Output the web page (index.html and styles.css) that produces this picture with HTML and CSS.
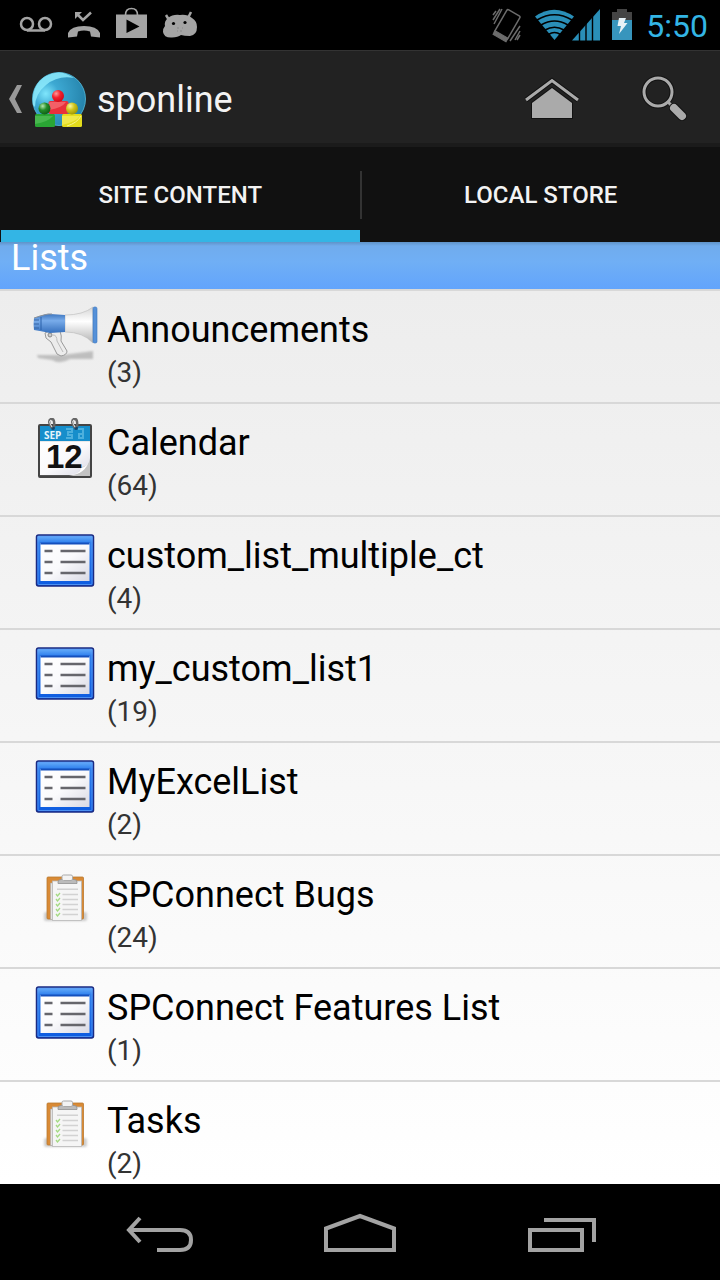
FILE: index.html
```html
<!DOCTYPE html>
<html lang="en">
<head>
    <meta charset="UTF-8">
    <meta name="viewport" content="width=device-width, initial-scale=1.0">
    <title>sponline</title>
    <link rel="stylesheet" href="styles.css">
</head>
<body>
    <!-- shared icons for the list rows -->
    <svg class="defs" width="0" height="0" aria-hidden="true">
        <defs>
            <linearGradient id="blue" x1="0" y1="0" x2="0" y2="1">
                <stop offset="0" stop-color="#6fb4fb"/>
                <stop offset="0.15" stop-color="#2f80ee"/>
                <stop offset="1" stop-color="#0d5be0"/>
            </linearGradient>
            <linearGradient id="paper" x1="0" y1="0" x2="1" y2="1">
                <stop offset="0" stop-color="#ffffff"/>
                <stop offset="0.5" stop-color="#fafafc"/>
                <stop offset="1" stop-color="#d9d9e4"/>
            </linearGradient>
            <linearGradient id="horn" x1="0" y1="0" x2="0" y2="1">
                <stop offset="0" stop-color="#d5d5d5"/>
                <stop offset="0.4" stop-color="#ffffff"/>
                <stop offset="1" stop-color="#b4b4b4"/>
            </linearGradient>
            <linearGradient id="hornBlue" x1="0" y1="0" x2="0" y2="1">
                <stop offset="0" stop-color="#3f77c0"/>
                <stop offset="0.35" stop-color="#79acea"/>
                <stop offset="1" stop-color="#3670bd"/>
            </linearGradient>
            <filter id="soft" x="-20%" y="-50%" width="140%" height="200%">
                <feGaussianBlur stdDeviation="1"/>
            </filter>
            <symbol id="icon-announce" viewBox="0 0 66 64">
                <path d="M5 50L30 50L61 46L61 54L38 54Q28 60 20 55L6 53Z" fill="#aaa" opacity="0.7" filter="url(#soft)"/>
                <path d="M13 28L17 26L28 26Q30 31 29 36L35 46Q35 50 29 51L25 49L19 37L14 33Z" fill="#ececec" stroke="#999"/>
                <path d="M21 30Q25 30 25 36L31 47" fill="none" stroke="#bbb"/>
                <circle cx="18" cy="30" r="2" fill="#ccc" stroke="#888"/>
                <path d="M33 10Q51 10 61 2L61 38Q51 27 33 27Z" fill="url(#horn)" stroke="#bbb" stroke-width="0.6"/>
                <path d="M2 13L8 11Q12 9 18 9L33 10L33 27L18 28L8 26L2 25Q1 19 2 13Z" fill="url(#hornBlue)"/>
                <path d="M2 15H7M2 19H7M2 23H7" stroke="#3565a5" stroke-width="1.200"/>
                <path d="M9 12V25" stroke="#2a61aa"/>
                <path d="M2 13L8 11L16 9H20" fill="none" stroke="#8a9098"/>
                <rect x="61" y="2" width="4" height="36" rx="1.500" fill="#5590d8" stroke="#3b76c0" stroke-width="0.6"/>
            </symbol>
            <symbol id="icon-calendar" viewBox="0 0 66 64">
                <path d="M8 60H60" stroke="#777" stroke-width="2" opacity="0.5" filter="url(#soft)"/>
                <rect x="7" y="7" width="52" height="52" rx="1" fill="#e9e9e9" stroke="#444" stroke-width="2"/>
                <path d="M8 24H58V48Q54 58 40 58H8Z" fill="url(#paper)"/>
                <rect x="8" y="8" width="50" height="15" fill="#168ecb"/>
                <path d="M8 57.500H58" stroke="#555"/>
                <path d="M58 40Q57 49 49 49Q49 56 37 58H58Z" fill="#c4c4c4"/>
                <path d="M58 41Q56 49 49 50Q48 56 38 57Q53 57 58 41Z" fill="#fff"/>
                <path d="M34 11H40V14H36V17H40V20H34M46 11H51V20H47V16H51" fill="none" stroke="#4db0dd" stroke-width="2"/>
                <text x="12" y="21" class="cal-month">SEP</text>
                <text x="14" y="50" class="cal-day">12</text>
                <circle cx="21" cy="10" r="2" fill="#17456a"/>
                <circle cx="44" cy="10" r="2" fill="#17456a"/>
                <path d="M20 10Q15 3 19 1Q23 0 22 9M43 10Q38 3 42 1Q46 0 45 9" fill="none" stroke="#666" stroke-width="2.500"/>
                <path d="M20 9Q16 3 19 2M43 9Q39 3 42 2" fill="none" stroke="#eee"/>
            </symbol>
            <symbol id="icon-list" viewBox="0 0 66 64">
                <rect x="4.500" y="4" width="57" height="51" rx="2" fill="url(#blue)" stroke="#1a2a82" stroke-width="1.500"/>
                <rect x="6" y="5.500" width="54" height="48" rx="1" fill="none" stroke="#5c9df6" stroke-width="0.8"/>
                <rect x="8.500" y="12" width="49" height="38" fill="url(#paper)"/>
                <path d="M8.500 12.500H57.500" stroke="#1450bd" stroke-width="2"/>
                <path d="M12.500 20H20.500M12.500 31H20.500M12.500 42H20.500M28.500 20H53.500M28.500 31H53.500M28.500 42H53.500" stroke="#66666c" stroke-width="2.400"/>
            </symbol>
            <symbol id="icon-tasks" viewBox="0 0 66 64">
                <rect x="12" y="42" width="43" height="9" rx="2" fill="#888" opacity="0.4" filter="url(#soft)"/>
                <rect x="15" y="7" width="36.500" height="42" rx="1" fill="#d98a35" stroke="#b97830" stroke-width="0.8"/>
                <path d="M18.500 13V49.500H21V13Z" fill="#e3e3e3" stroke="#aaa" stroke-width="0.6"/>
                <rect x="20.500" y="11" width="29" height="39.500" fill="#f5f5f5" stroke="#b8b8b8" stroke-width="0.8"/>
                <path d="M25 19.300H46M30.500 24.500H46M30.500 29.500H46M30.500 34.500H46M30.500 39.500H46M30.500 44.500H46" stroke="#d2d2d2" stroke-width="1.400"/>
                <path d="M24 24L25.500 26L28 23M24 29L25.500 31L28 28M24 34L25.500 36L28 33M24 39L25.500 41L28 38M24 44L25.500 46L28 43" fill="none" stroke="#a5da83" stroke-width="1.300"/>
                <path d="M26 12Q26 9.500 29 9.500H42Q45 9.500 45 12V13.500H26Z" fill="#bbb" stroke="#909090" stroke-width="0.8"/>
                <rect x="30" y="5" width="10.500" height="5.500" rx="1.500" fill="#f3f3f3" stroke="#aaa"/>
            </symbol>
        </defs>
    </svg>

    <div class="status-bar">
        <div class="notifications">
            <svg width="48" height="50" viewBox="0 0 48 50" fill="none" stroke="#a4a4a4" stroke-width="2.500">
                <circle cx="15" cy="24" r="6"/>
                <circle cx="33" cy="24" r="6"/>
                <path d="M15 30.500H33"/>
            </svg>
            <svg width="48" height="50" viewBox="0 0 48 50">
                <path d="M16 13L23 20L31 12.500" fill="none" stroke="#a4a4a4" stroke-width="2.500"/>
                <path d="M15 12H22L15 19Z" fill="#a4a4a4"/>
                <path d="M8 37.500V33Q11 26 24 26Q37 26 40 33V37.500L31 36.500L30 31.500Q24 29.500 18 31.500L17 36.500Z" fill="#a4a4a4"/>
            </svg>
            <svg width="48" height="50" viewBox="0 0 48 50">
                <path d="M17.500 15Q17.500 8.500 23.500 8.500Q29.500 8.500 29.500 15" fill="none" stroke="#a4a4a4" stroke-width="1.600"/>
                <path d="M8 14.500H39V38H8ZM18.500 19.500V33L31.500 26.500Z" fill="#a4a4a4" fill-rule="evenodd"/>
            </svg>
            <svg width="48" height="50" viewBox="0 0 48 50">
                <path d="M10 15L13 20M35 12L32 18" stroke="#a4a4a4" stroke-width="2.500"/>
                <path d="M12 18Q17 14 24 15Q31 14 36 18Q41 21 41 27Q41 35 34 36Q28 36 25 35Q22 37 16 37.500Q8 38 7 32Q7 28 9 26Q8 21 12 18Z" fill="#a4a4a4"/>
                <path d="M21 28H23M24 31H26M21 31H22M26 28H27" stroke="#888"/>
                <circle cx="17.500" cy="23.500" r="1.600"/>
                <circle cx="29" cy="22.500" r="1.600"/>
            </svg>
        </div>
        <div class="system">
            <svg width="40" height="50" viewBox="0 0 40 50">
                <g transform="translate(19 25) rotate(30)" fill="none" stroke="#6c6c6c">
                    <rect x="-7.500" y="-14" width="15" height="27" rx="1.500" stroke-width="1.500"/>
                    <path d="M-7.500 11H7.500V15H-7.500Z" fill="#6c6c6c"/>
                </g>
                <path d="M5 15L8 11M5 20L12 9M6 24L14 9M32 26L22 41M32 31L27 40M32 35L29 40" stroke="#6c6c6c" stroke-width="1.500"/>
            </svg>
            <svg width="72" height="50" viewBox="0 0 72 50">
                <path d="M3 16.500Q22 3 42 16.500L22.500 40Z" fill="#2a8fb8"/>
                <path d="M5 20Q22.500 9.500 40 20M9 25Q22.500 17 36 25M13 30Q22.500 24.500 32 30M16.500 34.500Q22.500 30.500 28.500 34.500" fill="none" stroke="#000" stroke-width="1.600"/>
                <path d="M40 40.500L68 9V40.500Z" fill="#2a8fb8"/>
                <path d="M47.500 10V41M54 10V41M60.500 10V41" stroke="#000" stroke-width="1.400"/>
            </svg>
            <svg width="28" height="50" viewBox="0 0 28 50">
                <path d="M4 12H9V9H19V12H24V20H4Z" fill="#444"/>
                <path d="M4 20H24V40H4Z" fill="#3795bd"/>
                <path d="M11 18H18L16 23H19.500L11 34L13 26H9.500Z" fill="#e6f2f7"/>
            </svg>
            <span class="clock">5:50</span>
        </div>
    </div>

    <header class="action-bar">
        <button class="up" aria-label="Navigate up">
            <svg width="16" height="30" viewBox="0 0 16 30">
                <path d="M9 0H14L7 14L14 28H9L1 14Z" fill="#999"/>
            </svg>
            <svg width="54" height="58" viewBox="0 0 54 58">
                <defs>
                    <radialGradient id="globe" cx="0.25" cy="0.4" r="0.8">
                        <stop offset="0" stop-color="#7fe6fc"/>
                        <stop offset="0.3" stop-color="#3da9d3"/>
                        <stop offset="1" stop-color="#2380a8"/>
                    </radialGradient>
                    <radialGradient id="redBall" cx="0.35" cy="0.3" r="0.7"><stop offset="0" stop-color="#ff9a9a"/><stop offset="0.5" stop-color="#f4202c"/><stop offset="1" stop-color="#d00d1c"/></radialGradient>
                    <radialGradient id="greenBall" cx="0.35" cy="0.3" r="0.7"><stop offset="0" stop-color="#b7e8b0"/><stop offset="0.5" stop-color="#238c28"/><stop offset="1" stop-color="#126018"/></radialGradient>
                    <radialGradient id="yellowBall" cx="0.35" cy="0.3" r="0.7"><stop offset="0" stop-color="#fbf7a0"/><stop offset="0.5" stop-color="#cfc41c"/><stop offset="1" stop-color="#a29a08"/></radialGradient>
                </defs>
                <circle cx="27" cy="28" r="26.500" fill="url(#globe)" stroke="#55bfe0" stroke-width="0.8"/>
                <path d="M1 34Q-1 14 14 5Q28 -3 42 7Q26 4 14 14Q3 23 3 36Z" fill="#8deafb" opacity="0.85"/>
                <rect x="16.500" y="30" width="20" height="13" rx="2" fill="#e8303c"/>
                <path d="M17 32Q17 31 19 31H34Q30 37 17 39Z" fill="#f56b72" opacity="0.8"/>
                <circle cx="26" cy="25" r="6" fill="url(#redBall)"/>
                <rect x="3" y="43" width="20" height="13" rx="1.500" fill="#2aa534"/>
                <path d="M3 45H21Q16 51 3 53Z" fill="#65c968" opacity="0.5"/>
                <circle cx="12.500" cy="37.500" r="6" fill="url(#greenBall)"/>
                <rect x="30" y="43" width="20" height="13" rx="1.500" fill="#e3dc1c"/>
                <path d="M30 45H48Q44 51 30 54Z" fill="#f6f16a" opacity="0.6"/>
                <path d="M35 55Q45 52 49 45" fill="none" stroke="#f9f68c"/>
                <circle cx="40" cy="37.500" r="6" fill="url(#yellowBall)"/>
            </svg>
        </button>
        <h1>sponline</h1>
        <button class="action" aria-label="Home">
            <svg width="56" height="48" viewBox="0 0 56 48">
                <path d="M2 25L28 5.500L54 25" fill="none" stroke="#111" stroke-width="5"/>
                <path d="M8 28L28 13L48 28V43H8Z" fill="#aaa" stroke="#111" stroke-width="2" paint-order="stroke"/>
                <path d="M2 25L28 5.500L54 25" fill="none" stroke="#aaa" stroke-width="3"/>
            </svg>
        </button>
        <button class="action" aria-label="Search">
            <svg width="48" height="48" viewBox="0 0 48 48" fill="none">
                <circle cx="18" cy="17" r="14" stroke="#111" stroke-width="5"/>
                <circle cx="18" cy="17" r="14" stroke="#aaa" stroke-width="3"/>
                <path d="M28 27L34 33" stroke="#aaa" stroke-width="3"/>
                <path d="M34 33L42 41" stroke="#111" stroke-width="10" stroke-linecap="round"/>
                <path d="M34 33L42 41" stroke="#aaa" stroke-width="8" stroke-linecap="round"/>
            </svg>
        </button>
    </header>

    <nav class="tabs">
        <button class="tab selected">SITE CONTENT</button>
        <span class="divider"></span>
        <button class="tab">LOCAL STORE</button>
    </nav>

    <main>
        <h2>Lists</h2>
        <ul class="lists">
            <li><a href="#"><svg class="icon"><use href="#icon-announce"/></svg><span class="name">Announcements</span><span class="count">(3)</span></a></li>
            <li><a href="#"><svg class="icon"><use href="#icon-calendar"/></svg><span class="name">Calendar</span><span class="count">(64)</span></a></li>
            <li><a href="#"><svg class="icon"><use href="#icon-list"/></svg><span class="name">custom_list_multiple_ct</span><span class="count">(4)</span></a></li>
            <li><a href="#"><svg class="icon"><use href="#icon-list"/></svg><span class="name">my_custom_list1</span><span class="count">(19)</span></a></li>
            <li><a href="#"><svg class="icon"><use href="#icon-list"/></svg><span class="name">MyExcelList</span><span class="count">(2)</span></a></li>
            <li><a href="#"><svg class="icon"><use href="#icon-tasks"/></svg><span class="name">SPConnect Bugs</span><span class="count">(24)</span></a></li>
            <li><a href="#"><svg class="icon"><use href="#icon-list"/></svg><span class="name">SPConnect Features List</span><span class="count">(1)</span></a></li>
            <li><a href="#"><svg class="icon"><use href="#icon-tasks"/></svg><span class="name">Tasks</span><span class="count">(2)</span></a></li>
        </ul>
    </main>

    <footer class="nav-bar">
        <button aria-label="Back">
            <svg width="80" height="48" viewBox="0 0 80 48">
                <path d="M20 10L9 22L20 34M9 22H60Q71 22 71 32Q71 42 60 42H37"/>
            </svg>
        </button>
        <button aria-label="Home screen">
            <svg width="80" height="48" viewBox="0 0 80 48">
                <path d="M6 42V20.500L40 8L74 20.500V42Z"/>
            </svg>
        </button>
        <button aria-label="Recent apps">
            <svg width="80" height="48" viewBox="0 0 80 48">
                <path d="M10 22H62V42H10ZM24 12H74V34"/>
            </svg>
        </button>
    </footer>
</body>
</html>
```
FILE: styles.css
```css
* {
    box-sizing: border-box;
}
body {
    font-family: Roboto, "Liberation Sans", sans-serif;
    display: flex;
    flex-direction: column;
    height: 100vh;
    margin: 0;
    background-color: #000;
    overflow: hidden;
}
svg {
    display: block;
}
.defs {
    position: absolute;
}
button {
    display: flex;
    justify-content: center;
    align-items: center;
    padding: 0;
    font-family: inherit;
    background: none;
    border: none;
    cursor: pointer;
}

/* status bar */
.status-bar {
    display: flex;
    justify-content: space-between;
    height: 50px;
    flex-shrink: 0;
    padding: 0 12px;
}
.notifications {
    display: flex;
}
.system {
    display: flex;
    gap: 4px;
}
.clock {
    padding-left: 6px;
    font-size: 32px;
    line-height: 52px;
    color: #33b5e5;
}

/* action bar */
.action-bar {
    display: flex;
    align-items: stretch;
    height: 97px;
    flex-shrink: 0;
    background-color: #222;
    border-top: 1px solid #333;
    border-bottom: 4px solid #1b1b1b;
}
.up {
    padding: 6px 0 0 8px;
    gap: 8px;
}
h1 {
    flex: 1;
    margin: 0;
    padding-left: 11px;
    font-size: 36px;
    font-weight: normal;
    line-height: 98px;
    color: #f3f3f3;
}
.action {
    width: 112px;
    padding-top: 4px;
}

/* tabs */
.tabs {
    display: flex;
    align-items: center;
    height: 95px;
    flex-shrink: 0;
    background-color: #111;
}
.tab {
    flex: 1;
    align-self: stretch;
    font-size: 24px;
    font-weight: 500;
    color: #f3f3f3;
    border-top: 12px solid transparent;
    border-bottom: 12px solid transparent;
}
.tab.selected {
    margin-left: 1px;
    border-bottom-color: #33b5e5;
}
.divider {
    width: 2px;
    height: 48px;
    background-color: #333;
}

/* content */
main {
    flex: 1;
    min-height: 0;
    overflow: hidden;
    background: linear-gradient(#ececec, #fff);
}
h2 {
    height: 47px;
    margin: 0;
    padding-left: 11px;
    font-size: 36px;
    font-weight: normal;
    line-height: 32px;
    color: #fff;
    background: linear-gradient(#5f93c8, #70aced 4px, #70aff5 20px, #62a4fc);
}
.lists {
    margin: 0;
    padding: 0;
    list-style: none;
}
.lists li {
    border-top: 2px solid #d8d8d8;
}
.lists a {
    display: grid;
    grid-template-columns: 66px 1fr;
    grid-template-rows: 44px 42px;
    column-gap: 9px;
    padding: 17px 8px 8px 32px;
    color: #000;
    text-decoration: none;
}
.icon {
    grid-row: 1 / 3;
    width: 66px;
    height: 64px;
    margin-top: -3px;
}
.name {
    font-size: 36px;
    line-height: 44px;
}
.count {
    font-size: 28px;
    line-height: 42px;
    color: #333;
}
.cal-month {
    font: bold 10px "Open Sans", sans-serif;
    fill: #e4f5fc;
}
.cal-day {
    font: bold 33px "Liberation Sans", sans-serif;
    fill: #111;
}

/* navigation bar */
.nav-bar {
    display: flex;
    height: 96px;
    flex-shrink: 0;
    padding: 0 60px;
}
.nav-bar button {
    flex: 1;
}
.nav-bar path {
    fill: none;
    stroke: #a3a3a3;
    stroke-width: 4;
}
```
